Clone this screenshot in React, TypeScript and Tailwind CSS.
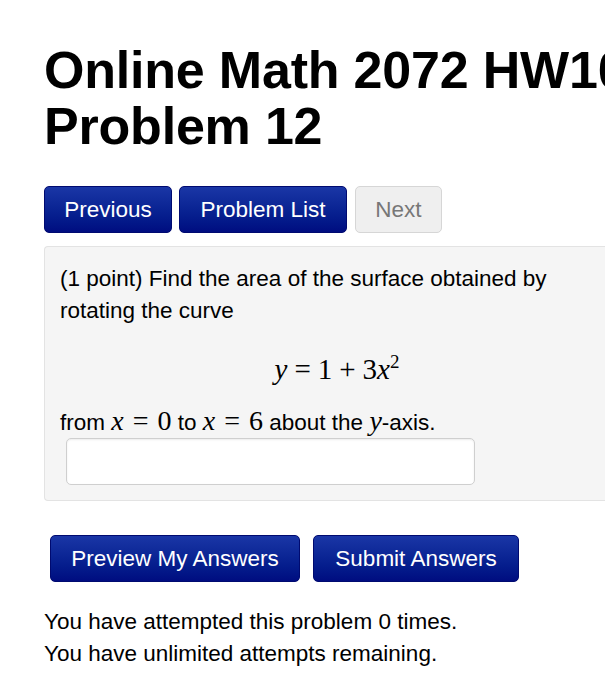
export default function App() {
  const btn =
    'h-[47px] rounded-[5px] border border-[#000a70] bg-gradient-to-b from-[#1a36a6] to-[#000c80] text-[22.5px] text-white';
  const serif = "font-['Liberation_Serif',serif]";

  return (
    <div className="h-[700px] w-[605px] overflow-hidden bg-white font-['Liberation_Sans',Arial,sans-serif] text-black">
      <div className="w-[640px] pl-[44px] pt-[42px]">
        <h1 className="text-[52px] font-bold leading-[56px] tracking-[-0.2px]">
          Online Math 2072 HW10 Problem 12
        </h1>

        <div className="mt-[32px] flex gap-[7px]">
          <button className={`${btn} w-[128px]`}>Previous</button>
          <button className={`${btn} w-[168px]`}>Problem List</button>
          <button className="ml-[1px] h-[47px] w-[87px] rounded-[5px] border border-[#d6d6d6] bg-[#efefef] text-[22.5px] text-[#777]">
            Next
          </button>
        </div>

        <div className="mt-[13px] h-[255px] w-[576px] rounded-l-[4px] border border-r-0 border-[#e3e3e3] bg-[#f5f5f5] pl-[15px] pt-[16px]">
          <p className="w-[520px] text-[22.5px] leading-[32px]">
            (1 point) Find the area of the surface obtained by rotating the curve
          </p>
          <div className={`${serif} mt-[24px] pr-[6px] text-center text-[29px] leading-[36px]`}>
            <i>y</i>
            <span className="mx-[7px]">=</span>1<span className="mx-[7px]">+</span>3<i>x</i>
            <sup className="-top-[11px] text-[19px]">2</sup>
          </div>
          <p className="mt-[18px] text-[22.5px] leading-[32px]">
            from{' '}
            <span className={`${serif} text-[28px]`}>
              <i>x</i>
              <span className="mx-[9px]">=</span>0
            </span>{' '}
            to{' '}
            <span className={`${serif} text-[28px]`}>
              <i>x</i>
              <span className="mx-[9px]">=</span>6
            </span>{' '}
            about the <i className={`${serif} text-[28px]`}>y</i>-axis.
          </p>
          <div className="ml-[6px] mt-[-1px] h-[47px] w-[409px] rounded-[5px] border border-[#cfcfcf] bg-white shadow-[inset_0_1px_2px_rgba(0,0,0,0.08)]" />
        </div>

        <div className="ml-[6px] mt-[34px] flex gap-[13px]">
          <button className={`${btn} w-[250px]`}>Preview My Answers</button>
          <button className={`${btn} w-[206px]`}>Submit Answers</button>
        </div>

        <div className="mt-[24px] text-[22.5px] leading-[32px]">
          <p>You have attempted this problem 0 times.</p>
          <p>You have unlimited attempts remaining.</p>
        </div>
      </div>
    </div>
  );
}
